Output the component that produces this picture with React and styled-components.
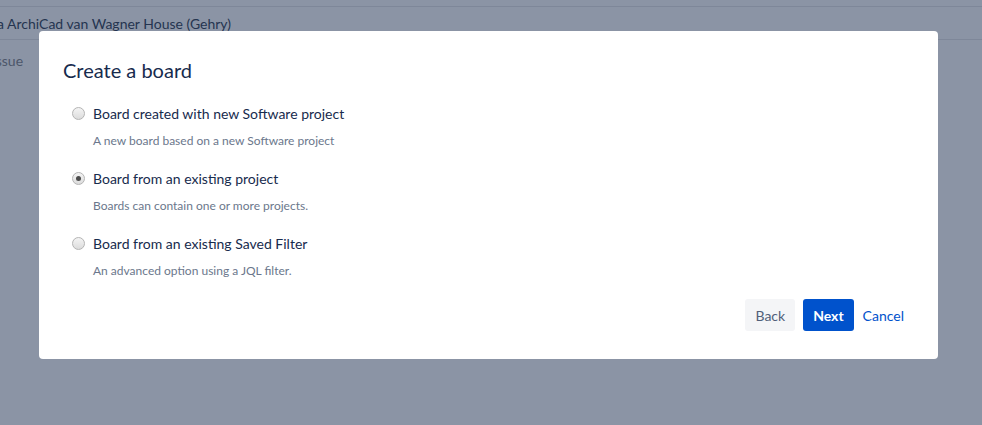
import React from 'react';
import styled, { createGlobalStyle } from 'styled-components';

const Global = createGlobalStyle`
html, body {
    margin: 0;
    padding: 0;
    background: #8b94a5;
    font-family: "Lato", "Noto Sans", sans-serif;
}
`;

const Page = styled.div`
position: relative;
width: 982px;
height: 425px;
overflow: hidden;
background: #8b94a5;
`;

const BackRow = styled.div`
display: flex;
align-items: center;
height: 32px;
margin-top: 6px;
border-top: 1px solid #7e8799;
border-bottom: 1px solid #7e8799;
margin-left: -3px;
font-size: 14px;
color: #253450;
`;

const BackLink = styled.div`
padding: 12px 0 0 0;
margin-left: -8px;
font-size: 14px;
color: #4c566a;
`;

const Dialog = styled.div`
position: absolute;
left: 39px;
top: 31px;
width: 899px;
height: 328px;
box-sizing: border-box;
background: #ffffff;
border-radius: 4px;
padding: 27px 24px 0 24px;
display: flex;
flex-direction: column;
`;

const Title = styled.h2`
margin: 0;
font-size: 20px;
font-weight: 400;
line-height: 24px;
color: #172b4d;
`;

const Options = styled.div`
display: flex;
flex-direction: column;
gap: 19px;
margin-top: 21px;
padding-left: 9px;
`;

const Option = styled.label`
display: flex;
flex-direction: column;
`;

const OptionHead = styled.div`
display: flex;
align-items: center;
gap: 8px;
height: 20px;
font-size: 14px;
color: #172b4d;
`;

const Radio = styled.span`
width: 11px;
height: 11px;
border-radius: 50%;
border: 1px solid #b4b4b4;
background: linear-gradient(#f4f4f4, #dcdcdc);
display: flex;
align-items: center;
justify-content: center;
&::after {
    content: '';
    width: 5px;
    height: 5px;
    border-radius: 50%;
    background: ${props => props.checked ? '#4a4a4a' : 'transparent'};
}
`;

const Desc = styled.div`
margin-top: 10px;
margin-left: 21px;
font-size: 12px;
line-height: 16px;
color: #6b778c;
`;

const Footer = styled.div`
display: flex;
justify-content: flex-end;
align-items: center;
gap: 8px;
margin-top: auto;
margin-bottom: 28px;
padding-right: 10px;
`;

const Button = styled.button`
height: 32px;
padding: 0 10px;
border: none;
border-radius: 3px;
font-family: inherit;
font-size: 14px;
cursor: pointer;
background: ${props => props.primary ? '#0052cc' : '#f4f5f7'};
color: ${props => props.primary ? '#ffffff' : '#505f79'};
font-weight: ${props => props.primary ? 700 : 400};
`;

const LinkButton = styled.a`
font-size: 14px;
color: #0052cc;
margin-left: 1px;
cursor: pointer;
`;

const options = [
    { label: 'Board created with new Software project', desc: 'A new board based on a new Software project' },
    { label: 'Board from an existing project', desc: 'Boards can contain one or more projects.', checked: true },
    { label: 'Board from an existing Saved Filter', desc: 'An advanced option using a JQL filter.' },
];

const App = () => {
    return (
        <Page>
            <Global />
            <BackRow>a ArchiCad van Wagner House (Gehry)</BackRow>
            <BackLink>Issue</BackLink>
            <Dialog>
                <Title>Create a board</Title>
                <Options>
                    {options.map(o => (
                        <Option key={o.label}>
                            <OptionHead>
                                <Radio checked={o.checked} />
                                <span>{o.label}</span>
                            </OptionHead>
                            <Desc>{o.desc}</Desc>
                        </Option>
                    ))}
                </Options>
                <Footer>
                    <Button>Back</Button>
                    <Button primary>Next</Button>
                    <LinkButton>Cancel</LinkButton>
                </Footer>
            </Dialog>
        </Page>
    );
};

export default App;
